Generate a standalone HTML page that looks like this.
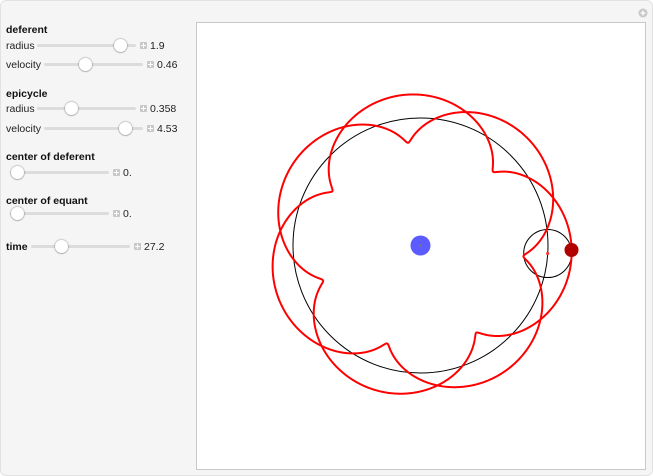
<!DOCTYPE html>
<html><head><meta charset="utf-8"><style>
body{margin:0;width:653px;height:476px;background:#fff;overflow:hidden;font-family:"Liberation Sans",sans-serif;}
#panel{position:absolute;left:0;top:0;width:651px;height:474px;background:#f5f5f5;border:1px solid #e2e2e2;border-radius:6px;}
.t{position:absolute;font-size:10.5px;color:#222;line-height:12px;white-space:nowrap}
.b{font-weight:bold;color:#111}
.tr{position:absolute;height:3px;background:#dcdcdc;border-radius:2px}
.kn{position:absolute;width:13px;height:13px;border-radius:50%;background:#fff;box-shadow:0 0 1px 1px rgba(0,0,0,0.18),0 1px 1px rgba(0,0,0,0.15)}
.pl{position:absolute;width:7px;height:7px;background:#c8c8c8;border-radius:1px}
.pl:before{content:"";position:absolute;left:3px;top:1px;width:1px;height:5px;background:#fff}
.pl:after{content:"";position:absolute;left:1px;top:3px;width:5px;height:1px;background:#fff}
#plot{position:absolute;left:196px;top:22px;width:448px;height:446px;background:#fff;border:1px solid #c8c8c8;}
</style></head><body>
<div id="panel"></div>
<div id="ctl"></div>
<div id="plot"></div>
<svg style="position:absolute;left:0;top:0" width="653" height="476">
<circle cx="643" cy="13" r="4.5" fill="#c8c8c8"/>
<path d="M643 10.5v5M640.5 13h5" stroke="#fff" stroke-width="1.3"/>
<circle cx="420.5" cy="245.5" r="127.5" fill="none" stroke="#000" stroke-width="1"/>
<circle cx="547.7" cy="253.5" r="24" fill="none" stroke="#000" stroke-width="1"/>
<path id="cur" fill="none" stroke="#ff0000" stroke-width="2" stroke-linejoin="round"/>
<circle cx="420.5" cy="245.5" r="10" fill="#5b5bff"/>
<circle cx="420.5" cy="245.5" r="1.3" fill="#777"/>
<circle cx="547.7" cy="253.5" r="1.6" fill="#ff3333"/>
<circle cx="571.5" cy="250" r="7" fill="#b00000"/>
</svg>
<script>
(function(){
var cx=420.5,cy=245.5,R=127.5,r=24,k=4.5,tf=-0.063,t0=tf-4*Math.PI;
var phf=0.08,ph0=phf-k*tf,d="";
for(var i=0;i<=3000;i++){var t=t0+(tf-t0)*i/3000;var p=k*t+ph0;
var x=cx+R*Math.cos(t)+r*Math.cos(p),y=cy-R*Math.sin(t)-r*Math.sin(p);
d+=(i?"L":"M")+x.toFixed(2)+" "+y.toFixed(2);}
document.getElementById("cur").setAttribute("d",d);
var h="";
function lab(x,y,s,b){h+='<div class="t'+(b?' b':'')+'" style="left:'+x+'px;top:'+(y-5)+'px">'+s+'</div>';}
function sl(y,x1,x2,k,v){h+='<div class="tr" style="left:'+x1+'px;top:'+(y-1)+'px;width:'+(x2-x1)+'px"></div>';
h+='<div class="kn" style="left:'+(k-6.5)+'px;top:'+(y-6.5)+'px"></div>';
h+='<div class="pl" style="left:'+(x2+4)+'px;top:'+(y-3)+'px"></div>';
lab(x2+14,y,v);}
lab(6,29,"deferent",1);lab(6,45,"radius");sl(45,37,136,120,"1.9");
lab(6,64,"velocity");sl(64,44,143,85,"0.46");
lab(6,93,"epicycle",1);lab(6,108,"radius");sl(108,37,136,71,"0.358");
lab(6,128,"velocity");sl(128,44,143,125,"4.53");
lab(6,156,"center of deferent",1);sl(172,10,109,17,"0.");
lab(6,200,"center of equant",1);sl(213,10,109,17,"0.");
lab(6,246,"time",1);sl(246,31,130,61,"27.2");
document.getElementById("ctl").innerHTML=h;
})();
</script>
</body></html>
